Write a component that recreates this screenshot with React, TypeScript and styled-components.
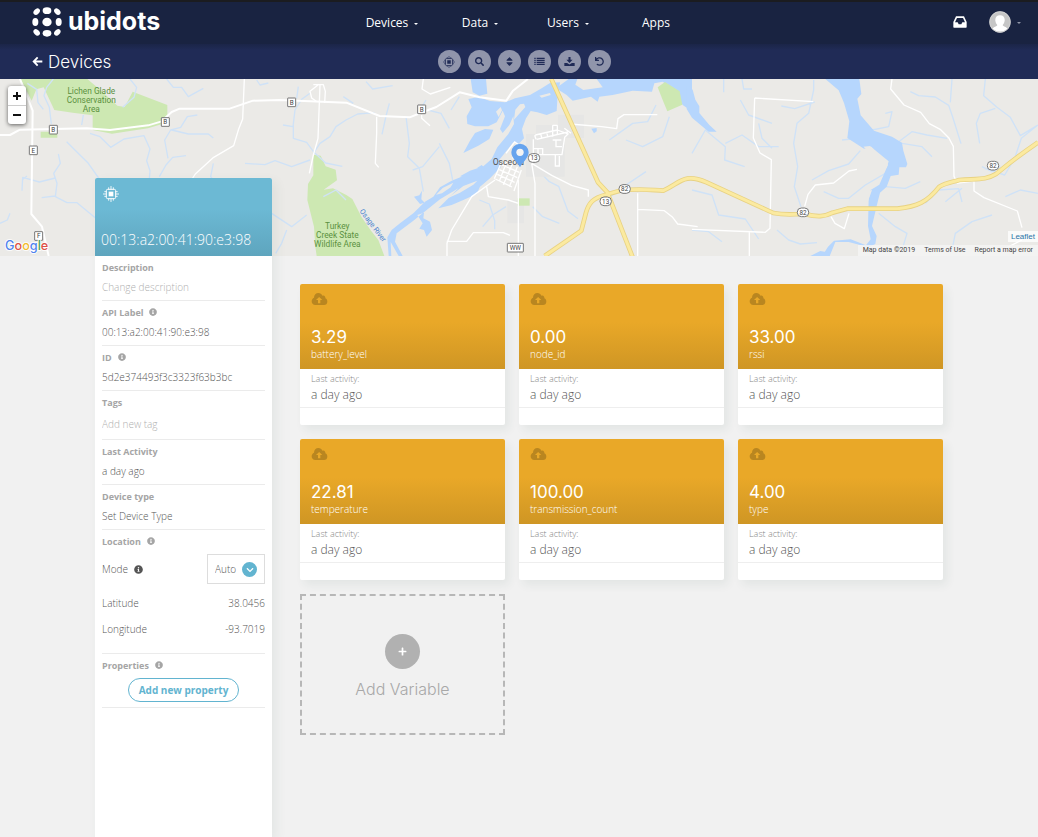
import React from "react";
import styled, { createGlobalStyle } from "styled-components";
import { FaChevronDown, FaInfoCircle, FaPlus, FaSearch, FaSort, FaUndo } from "react-icons/fa";

const GlobalStyle = createGlobalStyle`
  * { box-sizing: border-box; }
  body {
    margin: 0;
    background: #f1f1f1;
    color: #555;
    font-family: "Open Sans", "Liberation Sans", sans-serif;
    font-size: 10px;
    font-weight: 300;
  }
  button, input, select { font: inherit; color: inherit; }
  a { color: inherit; text-decoration: none; }
`;

const headingFont = `"Inter", "Open Sans", sans-serif`;

const Page = styled.div`
  min-height: 100vh;
  display: flex;
  flex-direction: column;
`;

const Bar = styled.div`
  display: grid;
  grid-template-columns: 1fr auto 1fr;
  align-items: center;
  padding: 0 17px 0 27px;
`;

const TopBar = styled(Bar).attrs({ as: "header" })`
  height: 44px;
  border-top: 2px solid #1b1c20;
  background: #192341;
  color: #fff;
`;

const SubBar = styled(Bar)`
  height: 35px;
  background: linear-gradient(#1b2548, #202b56 6px);
  color: #fff;
`;

const Brand = styled.a`
  display: flex;
  align-items: center;
  gap: 6px;
  padding: 0 0 4px 5px;
  font-family: ${headingFont};
  font-size: 25px;
  line-height: 28px;
  font-weight: 700;
  svg { margin-top: 2px; }
`;

const Nav = styled.nav`
  display: grid;
  grid-template-columns: repeat(4, 88px);
`;

const NavLink = styled.a`
  display: flex;
  align-items: center;
  justify-content: center;
  gap: 6px;
  font-size: 12px;
  line-height: 16px;
  font-weight: 400;
`;

const Caret = styled.span<{ $dim?: boolean }>`
  margin-top: 2px;
  border: solid transparent;
  border-width: 2px 2px 0;
  border-top-color: ${(p) => (p.$dim ? "#8f96a8" : "#fff")};
`;

const Account = styled.div`
  display: flex;
  justify-content: flex-end;
  align-items: center;
  gap: 22px;
  padding-bottom: 2px;
`;

const PlainButton = styled.button`
  display: flex;
  align-items: center;
  gap: 6px;
  padding: 0;
  border: 0;
  background: none;
`;

const BackLink = styled.a`
  display: flex;
  align-items: center;
  gap: 5px;
  padding-left: 5px;
  font-family: ${headingFont};
  font-size: 17px;
`;

const Toolbar = styled.div`
  display: flex;
  gap: 7px;
`;

const ToolButton = styled.button`
  display: grid;
  place-items: center;
  width: 23px;
  height: 23px;
  padding: 0;
  border: 0;
  border-radius: 50%;
  background: #9095ab;
  color: #202b56;
`;

const MapArea = styled.section`
  position: relative;
  height: 177px;
  background: #ebeae7;
  overflow: hidden;
  svg.map {
    display: block;
    width: 100%;
    height: 100%;
  }
`;

const ZoomControl = styled.div`
  position: absolute;
  top: 7px;
  left: 8px;
  display: flex;
  flex-direction: column;
  border-radius: 3px;
  background: #fff;
  box-shadow: 0 1px 4px rgba(0, 0, 0, 0.6);
`;

const ZoomButton = styled.button`
  display: grid;
  place-items: center;
  width: 18px;
  height: 19px;
  padding: 0;
  border: 0;
  background: none;
  color: #111;
  & + & {
    border-top: 1px solid #ccc;
  }
`;

const Credits = styled.div`
  position: absolute;
  right: 0;
  bottom: 0;
  display: flex;
  flex-direction: column;
  align-items: flex-end;
  gap: 3px;
  font-family: Roboto, "Liberation Sans", sans-serif;
  font-weight: 400;
  font-size: 7px;
  line-height: 11px;
  color: #444;
`;

const Credit = styled.div`
  display: flex;
  gap: 9px;
  padding: 0 5px;
  background: rgba(245, 245, 245, 0.8);
`;

const LeafletCredit = styled(Credit)`
  padding: 0 3px;
  background: rgba(255, 255, 255, 0.75);
  font-family: "Liberation Sans", sans-serif;
  font-size: 8px;
  color: #2a75a8;
`;

const Content = styled.main`
  flex: 1;
  display: grid;
  grid-template-columns: 177px 1fr;
  gap: 28px;
  width: 100%;
  max-width: 848px;
  margin: 0 auto;
`;

const Sidebar = styled.aside`
  position: relative;
  margin-top: -78px;
  background: #fff;
  border-radius: 2px 2px 0 0;
  box-shadow: 4px 4px 12px rgba(40, 80, 70, 0.07);
`;

const DeviceHeader = styled.div`
  display: flex;
  flex-direction: column;
  justify-content: space-between;
  height: 78px;
  padding: 8px 6px 6px;
  border-radius: 2px 2px 0 0;
  background: linear-gradient(#6cb9d4 40%, #5ea5be);
  color: #fff;
  svg { margin-left: 2px; }
`;

const DeviceName = styled.h1`
  margin: 0;
  font-size: 14px;
  line-height: 20px;
  font-weight: 300;
`;

const Section = styled.section`
  display: flex;
  flex-direction: column;
  gap: 7px;
  margin: 0 7px;
  padding: 5px 0 6px;
  border-bottom: 1px solid #ebebeb;
`;

const PropertySection = styled(Section)`
  padding-bottom: 5px;
`;

const LocationSection = styled(Section)`
  padding-bottom: 10px;
`;

const Label = styled.label`
  display: flex;
  align-items: center;
  gap: 6px;
  color: #a5a5a5;
  font-size: 9px;
  line-height: 13px;
  height: 12px;
  font-weight: 700;
`;

const Value = styled.div`
  line-height: 14px;
`;

const TextField = styled.input<{ $tall?: boolean }>`
  width: 100%;
  height: ${(p) => (p.$tall ? 18 : 14)}px;
  padding: 0;
  border: 0;
  background: none;
  outline: none;
  &::placeholder { color: #b0b0b0; opacity: 1; }
`;

const ModeRow = styled.div`
  display: flex;
  align-items: center;
  justify-content: space-between;
`;

const ModeLabel = styled.label`
  display: flex;
  align-items: center;
  gap: 6px;
`;

const SelectBox = styled.div`
  position: relative;
  width: 58px;
  height: 30px;
  select {
    width: 100%;
    height: 100%;
    padding: 0 7px;
    border: 1px solid #ddd;
    border-radius: 0;
    background: #fff;
    appearance: none;
  }
`;

const SelectArrow = styled.span`
  position: absolute;
  top: 8px;
  right: 8px;
  display: grid;
  place-items: center;
  width: 15px;
  height: 15px;
  border-radius: 50%;
  background: #62b4d0;
  color: #fff;
  pointer-events: none;
`;

const Coordinates = styled.dl`
  margin: 0;
`;

const Coordinate = styled.div`
  display: flex;
  justify-content: space-between;
  height: 26px;
  line-height: 24px;
  dd { margin: 0; }
`;

const PillButton = styled.button`
  align-self: center;
  height: 24px;
  padding: 0 10px;
  border: 1px solid #62b4d0;
  border-radius: 12px;
  background: #fff;
  color: #62b4d0;
  font-weight: 700;
`;

const CardGrid = styled.div`
  display: grid;
  grid-template-columns: repeat(3, 1fr);
  align-content: start;
  gap: 14px;
  padding: 28px 0;
`;

const Card = styled.article`
  height: 141px;
  border-radius: 2px;
  background: #fff;
  box-shadow: 4px 5px 10px rgba(40, 80, 70, 0.07);
`;

const CardTop = styled.div`
  display: flex;
  flex-direction: column;
  height: 85px;
  padding: 7px 10px 8px 11px;
  border-radius: 2px 2px 0 0;
  background: linear-gradient(#e9a828 45%, #cf9624);
  color: #fff;
  svg { margin-bottom: auto; }
`;

const Reading = styled.div`
  font-family: ${headingFont};
  font-size: 17px;
  line-height: 20px;
  font-weight: 400;
`;

const VariableName = styled.div`
  line-height: 14px;
`;

const CardBody = styled.div`
  padding: 4px 11px;
  border-bottom: 1px solid #eee;
`;

const ActivityLabel = styled.div`
  color: #888;
  font-size: 9px;
  line-height: 12px;
`;

const Activity = styled.div`
  padding-top: 2px;
  font-size: 12px;
  line-height: 16px;
`;

const AddCard = styled.button`
  display: flex;
  flex-direction: column;
  align-items: center;
  justify-content: center;
  gap: 10px;
  height: 141px;
  padding: 3px 0 0;
  border: 2px dashed #b7b7b7;
  background: none;
  color: #a8a8a8;
  font-family: ${headingFont};
  font-size: 16px;
`;

const PlusDisc = styled.span`
  display: grid;
  place-items: center;
  width: 35px;
  height: 35px;
  border-radius: 50%;
  background: #b1b1b1;
  color: #fff;
`;

const LogoMark = () => (
  <svg width="30" height="30" viewBox="-45 -45 90 90" fill="currentColor" aria-hidden="true">
    <ellipse rx="14" ry="13" />
    <ellipse cy="-34" rx="13" ry="10" />
    <ellipse cy="34" rx="13" ry="10" />
    <ellipse cx="-35" rx="9" ry="12" />
    <ellipse cx="35" rx="9" ry="12" />
    <ellipse cx="-31" cy="-31" rx="11" ry="8" transform="rotate(-45 -31 -31)" />
    <ellipse cx="31" cy="-31" rx="11" ry="8" transform="rotate(45 31 -31)" />
    <ellipse cx="-31" cy="31" rx="11" ry="8" transform="rotate(45 -31 31)" />
    <ellipse cx="31" cy="31" rx="11" ry="8" transform="rotate(-45 31 31)" />
  </svg>
);

const ChipIcon = ({ size }: { size: number }) => (
  <svg width={size} height={size} viewBox="0 0 48 48" fill="none" stroke="currentColor" aria-hidden="true">
    <rect x="10" y="10" width="28" height="28" rx="4" strokeWidth="3" />
    <rect x="17" y="17" width="14" height="14" fill="currentColor" stroke="none" />
    <path
      strokeWidth="2.6"
      d="M17 10V4M24 10V0M31 10V4M17 38v6M24 38v10M31 38v6M10 17H4M10 24H0M10 31H4M38 17h6M38 24h10M38 31h6"
    />
  </svg>
);

const BackArrow = () => (
  <svg width="11" height="11" viewBox="0 0 33 33" fill="none" stroke="currentColor" strokeWidth="5.5" aria-hidden="true">
    <path d="M17 4 5 16.500 17 29M6 16.500H31" />
  </svg>
);

const InboxIcon = () => (
  <svg width="14" height="12" viewBox="0 0 42 36" fill="currentColor" fillRule="evenodd" aria-hidden="true">
    <path d="M9 1h24l8 17v15q0 2-2 2H3q-2 0-2-2V18ZM12 6 6 19h8l3 6h8l3-6h8L30 6Z" />
  </svg>
);

const Avatar = () => (
  <svg width="22" height="22" viewBox="0 0 66 66" aria-hidden="true">
    <circle cx="33" cy="33" r="32" fill="#c6c6c6" />
    <path fill="#fff" d="M33 13c10 0 15 7 14 16-1 7-4 10-6 13 1 5 11 5 14 11a32 32 0 0 1-44 0c3-6 13-6 14-11-2-3-5-6-6-13-1-9 4-16 14-16Z" />
    <circle cx="33" cy="33" r="31" fill="none" stroke="#d9d9d9" strokeWidth="2" />
  </svg>
);

const ListIcon = () => (
  <svg width="11" height="9" viewBox="0 0 33 27" fill="currentColor" aria-hidden="true">
    <path d="M1 2h4v4H1zM8 2h24v4H8zM1 8h4v4H1zM8 8h24v4H8zM1 14h4v4H1zM8 14h24v4H8zM1 20h4v4H1zM8 20h24v4H8z" />
  </svg>
);

const DownloadIcon = () => (
  <svg width="11" height="11" viewBox="0 0 32 32" fill="currentColor" aria-hidden="true">
    <path d="M13 3h6v8h6l-9 9-9-9h6ZM1 20h8l7 5 7-5h8v9H1Z" />
  </svg>
);

const CloudIcon = () => (
  <svg width="17" height="15" viewBox="0 0 51 45" fill="#b98620" aria-hidden="true">
    <path
      fillRule="evenodd"
      d="M13 42C6 42 2 37 2 31c0-5 3-9 7-11C9 12 15 6 22 6c6 0 10 3 12 8 6-2 10 3 9 8 4 2 6 5 6 10 0 6-4 10-10 10ZM21 37h7V27h6L24.500 18 15 27h6Z"
    />
  </svg>
);

const Shield = ({ x, y, text, round, w = 24 }: { x: number; y: number; text: string; round?: boolean; w?: number }) => (
  <g>
    <rect x={x - w / 2} y={y - 13} width={w} height="26" rx={round ? 12 : 1} fill="#fff" stroke="#777" strokeWidth="3" />
    <text x={x} y={y + 7} textAnchor="middle" fontSize="19" fill="#444">
      {text}
    </text>
  </g>
);

const grass = "#cde8b2";
const water = "#b6d6fd";

/* Drawn on a 3114-unit wide sheet, three units to a pixel at the design width. */
const MapDrawing = () => (
  <svg className="map" viewBox="0 237 3114 531" preserveAspectRatio="xMidYMid slice" fontFamily="Roboto, sans-serif" fontWeight="400" role="img" aria-label="Map around Osceola">
    <rect y="237" width="3114" height="531" fill="#ebeae7" />
    <g fill={grass}>
      <path d="M62 237H262l45 38 45 42 22 4 24-46 104 40v30l-18 28-40 12-108 16-58-11V346l-60-8-55-8-18-38-14-30-22 6-14 34Z" />
      <path d="M122 395h24l16 8 10-6v16h-50Z" />
      <path d="M940 464l22 3 15 32 30 10 4 32-40 28 28-4 40 20 18 12 28 55 28 40 22 28 18 48H950l-4-28-4-60-20-80 2-48 16-26Z" />
    </g>
    <g fill="none" stroke="#cfe2f7" strokeWidth="4" strokeLinejoin="round">
      <path d="M82 250l28 18 4 40 16 20M160 237l-20 25-8 25 16 35 6 50M390 237l20 25-8 30-34 30M250 345l-5 30M500 237l20 25h25l20 28 45-25M200 425l30 30 35 35 35 50 40 30 20 18M270 400l30 10 32 32 40-25 60-10 18 40-10 35 10 30-2 25M592 345l-30 5-20 32-30 8-18 30 10 55M515 390l50 12 60 0 15 12M478 530l20-35 20-23 40-5M175 462l6 28-20 30 10 30-5 40 35 18h30l60 50M66 572l2-40 50 14 48-12M66 540l15-12M165 588l-40 5M0 670l22-10 8-20M895 260l-5 35M735 490l60 4 30-12 50 18 55-20M930 280l-25 18-20 32-6 50-30-5M880 375v40l40 12 22 30 35 32 50 10M940 460l20-30 30-20 18-30 30-20 35-18 50-4M640 490l-8 40 20 25M815 640l60 40 45-35M860 690l-15 40-18 30M1030 290l30 20M770 240l10 15 25-6M1038 600l-30 -30-38 20" />
      <g transform="translate(1038 0)">
        <path d="M60 245l20 22 60-10M130 310l-10 38-12 55M180 350l10 80-5 40 35 35 12 70M240 300l-28 45M245 330l40 10 25 45M280 440l-50 60-30 10M280 430l30 60 10 50M340 290l-25 40M570 505l40 40 28 14 28 75 30 22M560 620l30 30 50 20M400 600l30 12 16 50 0 26M480 620l-40 25-30 35M790 420l70-50 45-5 25-50M840 420l50 20 60-30 20-60M780 600l60-45 60-40" />
      </g>
      <g transform="translate(2076 0)">
        <path d="M150 237l5 30 25 0M145 300l25 45 70 25M95 237v40M268 318l40 8 60-20M365 240v30l-15 70-35 30-10 60 12 70-10 60 20 60M0 460l40-70 60 50-2 40 60 20M100 430l50-25 50 35 60 0M200 370l10 45 30 30M360 540l50-28 60-20 35-40M450 420l50-5M580 340l20-5-10 45-50 10M600 440l60-45 45 10 60 10M630 430l60 10 30 30M580 520l-60 35-50 40-30 0-45-20M580 560l60 5 45-20M655 275l25 12 50 4 40 25 12 35 25 80M780 237l-5 70M880 237l-5 50 40 35 40 30 30 55 50-30M910 325l-45 15-12 30 10 60M1038 375l-50 40-20 60-30 50-60-20M0 570l60 15 20 60 80 12 40 60M255 690l35 30 35 12 50-4M560 640l50 40 35 20-15 50M700 610l40-40 60-4 10 40M810 565l-50 40M780 750l10-50 50-35 60-20M870 500l30 15 25-15M940 590l45-20 53 10M0 690l50 5 40 30" />
      </g>
    </g>
    <g transform="translate(1350 237)">
      <path
        fill={water}
        d="M62 0H108L112 44 88 50 68 40ZM55 60 85 54 120 66 165 70 195 58 240 48 275 28 300 12 330 10 322 62 320 96 290 108 262 100 242 96 228 118 216 150 222 178 205 196 190 190 162 225 135 258 118 298 80 330 60 300 30 292 60 275 100 262 125 240 142 205 175 165 192 135 190 112 178 138 158 162 150 150 165 112 158 95 140 130 115 142 75 142 52 135 50 112 65 85ZM40 222 60 185 75 162 105 150 130 152 118 180 85 200Z"
      />
      <path fill="#ebeae7" d="M192 122 196 92 210 76 222 74 226 84 212 100ZM268 50 300 42 302 48 275 56ZM138 98 152 84 156 94 146 114Z" />
    </g>
    <g transform="translate(1140 450)">
      <path
        fill={water}
        d="M360 30 330 50 300 62 250 78 215 92 180 112 160 140 135 155 100 190 60 220 35 240 22 262 26 318H34L32 276 56 318H68L45 275 50 250 100 212 140 180 180 148 235 115 175 175 215 165 250 150 290 132 300 110 330 85 362 52ZM102 140 118 136 126 122 124 148 134 158 120 162ZM112 195 132 188 130 205 150 215 156 240 140 260 132 240 118 236 128 220ZM290 55 305 45 312 52Z"
      />
      <path fill="#ebeae7" d="M168 134 188 114 220 98 212 112 186 130ZM200 146 250 108 292 92 280 104 240 128Z" />
    </g>
    <g transform="translate(1038 0)">
      <path fill={water} d="M630 265 668 237H1038V334L1010 315 985 270 950 245 925 250 918 275 860 272 800 285 760 290 755 305 735 290 680 302 662 285Z" />
      <path fill="#ebeae7" d="M694 237 688 254 712 270 770 262 752 237Z" />
      <path fill={water} d="M736 386l16-2 0 10-8 6Z" />
    </g>
    <path fill={water} d="M2060 255l18 14 8 30 12 20 0 20 30 36 22 20-24 0-50-42-16-26Z" />
    <g transform="translate(2076 0)" fill={water}>
      <path d="M400 237h102l6 45-12 14 10 50 40 46 54 18 30 18 4 24 12 40-4 10-20 0-2 22-24 4-12 32-20 18-10 40-14 60 14 30-4 24-20 10-60-16-40 0-20 50-28 6 26-42 18-18 50-4 46 18 14-18-8-40 2-80 6-28 26-16 26-60-50-54-22 6-50-32 6-50-16-55-16-38Z" />
      <path d="M355 768l30-15 30 5-8 10Z" />
      <path fill="#ebeae7" d="M514 440l20-2 56 46-6 20-30-30ZM510 606l10-30 20-6-12 34Z" />
    </g>
    <path fill={grass} d="M1973 262l22-16 44 28 8 40-45 20-14-34Z" />
    <g fill="#e6e6e5" transform="translate(1038 0)">
      <path d="M636 344h78v70h-58v116H540V402h30V375h66ZM484 600h50v70h-50Z" />
    </g>
    <path fill={grass} d="M1553 595h36v22h-36Z" />
    <g fill="none" stroke="#fff" strokeLinejoin="round">
      <path strokeWidth="6" d="M0 405h30l30-16 200-4 70 5 115-14 40-12 30-28 24-10h150l70-24 80-2 200 8 100 40 90 4 40-16 40-15 70-44 60 15 80 10 20-30 45-35M60 237l38 95-4 310 32 38 20 88" />
      <path strokeWidth="4" d="M733 237l-5 120-12 30-15 50-60 35-55 50-8 12M960 255l-6 160-14 50-12 55M940 254l30 0 6 20-2 35M955 254l-25 20 5 20 14 10M1130 350v50l-4 90 10 12M1265 345l0 10 25 22M1270 237l-4 30 25 15 60-20M1595 490l60 36 60 30 50 14 0 20M1595 490l10 60v218M1485 540l-70 50-60 100-14 40v38M1460 560l5 30 60 10 30 10M1340 724h60l20-26h90l20 8M1710 372l95 8 45 6 4-30 18-12 100 0M1913 580v188M1913 628l80 4 25 20 15 20 60 8M1555 540v228" />
      <g transform="translate(2076 0)" strokeWidth="4">
        <path d="M188 294l176 11M188 294l-4 120 20 45 34 20-4 206-14 12L0 688M172 697v71M495 508l-24 5-46 36-55 6-22 28-10 36M417 650l12 20 28 16 14-46M600 237l-4 30 40 48 50 22 26 34 34 18 24 24 14 26 2 90 10 20 50-6 0 30 30 20 100 40 14 50M990 720l-60 30" />
      </g>
    </g>
    <g transform="translate(1038 0)" fill="none" stroke="#fff" strokeWidth="4">
      <path d="M468 495l52 22M460 509l54 24M454 523l52 24M448 537l50 24M465 490l-20 46M484 480l-24 64M500 490l-28 64M514 500l-24 60M526 510l-22 63M480 460l26-34 14 10-20 40M568 405l66-15M572 418l94-22M566 406l4 12M584 402l4 14M602 398l4 14M620 376v34M634 376v30M620 376h14M634 390l32 12-10 10-8 52h-84M562 418v46h28v-18h-26M576 446v18M620 420h26M630 420v20h18M628 464v34h12v-30M655 385l20 15" />
    </g>
    <g fill="none" strokeLinejoin="round">
      {[
        { color: "#e8d283", width: 14 },
        { color: "#fbeaa0", width: 9 },
      ].map(({ color, width }) => (
        <path
          key={color}
          stroke={color}
          strokeWidth={width}
          d="M1654 237l140 310 28 30 76 195M1634 768l110-76 14-54c8-28 20-44 60-54l42-12c60-8 90-2 130 0 50-22 60-55 130-25l200 92c40 8 60 3 94 3 40 10 60 8 84-4l44-12h150c60-6 90-20 126-66 20-12 40-14 60-20 60-4 80 0 110-18 30-24 60-50 126-95"
        />
      ))}
    </g>
    <g fontSize="25" fill="#5a9040" textAnchor="middle">
      <text x="274" y="281">Lichen Glade</text>
      <text x="274" y="309">Conservation</text>
      <text x="274" y="336">Area</text>
      <text x="1012" y="686">Turkey</text>
      <text x="1012" y="714">Creek State</text>
      <text x="1012" y="742">Wildlife Area</text>
    </g>
    <text fontSize="22" fill="#4d86d0" transform="translate(1078 634) rotate(53)">Osage River</text>
    <text x="1478" y="494" fontSize="26" fill="#555">Osceola</text>
    <Shield x={875} y={307} text="B" />
    <Shield x={496} y={366} text="B" />
    <Shield x={160} y={389} text="B" />
    <Shield x={100} y={451} text="E" />
    <Shield x={116} y={708} text="F" />
    <Shield x={1265} y={328} text="B" />
    <Shield x={1546} y={743} text="WW" w={48} />
    <Shield x={1602} y={474} text="13" w={34} round />
    <Shield x={1817} y={604} text="13" w={34} round />
    <Shield x={1874} y={567} text="82" w={34} round />
    <Shield x={2409} y={637} text="82" w={34} round />
    <Shield x={2979} y={497} text="82" w={34} round />
    <path fill="#67a4ee" d="M1560 502c-8-16-26-28-26-45a26 26 0 0 1 52 0c0 17-18 29-26 45Z" />
    <circle cx="1560" cy="457" r="11" fill="#f4f4f4" />
    <text x="15" y="751" fontFamily="Inter, sans-serif" fontSize="38" fontWeight="500" stroke="#fff" strokeWidth="5" paintOrder="stroke">
      <tspan fill="#4f83ee">G</tspan>
      <tspan fill="#dc5147">o</tspan>
      <tspan fill="#f2bb2e">o</tspan>
      <tspan fill="#4f83ee">g</tspan>
      <tspan fill="#46a45c">l</tspan>
      <tspan fill="#dc5147">e</tspan>
    </text>
  </svg>
);

const variables = [
  { value: "3.29", name: "battery_level" },
  { value: "0.00", name: "node_id" },
  { value: "33.00", name: "rssi" },
  { value: "22.81", name: "temperature" },
  { value: "100.00", name: "transmission_count" },
  { value: "4.00", name: "type" },
];

export default function App() {
  return (
    <Page>
      <GlobalStyle />
      <TopBar>
        <Brand href="#">
          <LogoMark />
          ubidots
        </Brand>
        <Nav>
          <NavLink href="#">Devices <Caret /></NavLink>
          <NavLink href="#">Data <Caret /></NavLink>
          <NavLink href="#">Users <Caret /></NavLink>
          <NavLink href="#">Apps</NavLink>
        </Nav>
        <Account>
          <PlainButton aria-label="Inbox"><InboxIcon /></PlainButton>
          <PlainButton aria-label="Account">
            <Avatar />
            <Caret $dim />
          </PlainButton>
        </Account>
      </TopBar>
      <SubBar>
        <BackLink href="#">
          <BackArrow />
          Devices
        </BackLink>
        <Toolbar>
          <ToolButton aria-label="Device icon"><ChipIcon size={12} /></ToolButton>
          <ToolButton aria-label="Search"><FaSearch size={9} /></ToolButton>
          <ToolButton aria-label="Sort"><FaSort size={11} /></ToolButton>
          <ToolButton aria-label="List view"><ListIcon /></ToolButton>
          <ToolButton aria-label="Download"><DownloadIcon /></ToolButton>
          <ToolButton aria-label="Refresh"><FaUndo size={9} /></ToolButton>
        </Toolbar>
      </SubBar>
      <MapArea>
        <MapDrawing />
        <ZoomControl>
          <ZoomButton aria-label="Zoom in">
            <svg width="8" height="8" viewBox="0 0 8 8" stroke="currentColor" strokeWidth="2"><path d="M0 4h8M4 0v8" /></svg>
          </ZoomButton>
          <ZoomButton aria-label="Zoom out">
            <svg width="8" height="8" viewBox="0 0 8 8" stroke="currentColor" strokeWidth="2"><path d="M0 4h8" /></svg>
          </ZoomButton>
        </ZoomControl>
        <Credits>
          <LeafletCredit><a href="#">Leaflet</a></LeafletCredit>
          <Credit>
            <span>Map data ©2019</span>
            <a href="#">Terms of Use</a>
            <a href="#">Report a map error</a>
          </Credit>
        </Credits>
      </MapArea>
      <Content>
        <Sidebar>
          <DeviceHeader>
            <ChipIcon size={16} />
            <DeviceName>00:13:a2:00:41:90:e3:98</DeviceName>
          </DeviceHeader>
          <Section>
            <Label htmlFor="description">Description</Label>
            <TextField id="description" placeholder="Change description" />
          </Section>
          <Section>
            <Label as="div">API Label <FaInfoCircle size={8} /></Label>
            <Value>00:13:a2:00:41:90:e3:98</Value>
          </Section>
          <Section>
            <Label as="div">ID <FaInfoCircle size={8} /></Label>
            <Value>5d2e374493f3c3323f63b3bc</Value>
          </Section>
          <Section>
            <Label htmlFor="tags">Tags</Label>
            <TextField id="tags" placeholder="Add new tag" $tall />
          </Section>
          <Section>
            <Label as="div">Last Activity</Label>
            <Value>a day ago</Value>
          </Section>
          <Section>
            <Label as="div">Device type</Label>
            <Value>Set Device Type</Value>
          </Section>
          <LocationSection>
            <Label as="div">Location <FaInfoCircle size={8} /></Label>
            <ModeRow>
              <ModeLabel htmlFor="mode">Mode <FaInfoCircle size={9} /></ModeLabel>
              <SelectBox>
                <select id="mode" defaultValue="Auto">
                  <option>Auto</option>
                  <option>Manual</option>
                </select>
                <SelectArrow><FaChevronDown size={8} /></SelectArrow>
              </SelectBox>
            </ModeRow>
            <Coordinates>
              <Coordinate><dt>Latitude</dt><dd>38.0456</dd></Coordinate>
              <Coordinate><dt>Longitude</dt><dd>-93.7019</dd></Coordinate>
            </Coordinates>
          </LocationSection>
          <PropertySection>
            <Label as="div">Properties <FaInfoCircle size={8} /></Label>
            <PillButton>Add new property</PillButton>
          </PropertySection>
        </Sidebar>
        <CardGrid>
          {variables.map((v) => (
            <Card key={v.name}>
              <CardTop>
                <CloudIcon />
                <Reading>{v.value}</Reading>
                <VariableName>{v.name}</VariableName>
              </CardTop>
              <CardBody>
                <ActivityLabel>Last activity:</ActivityLabel>
                <Activity>a day ago</Activity>
              </CardBody>
            </Card>
          ))}
          <AddCard>
            <PlusDisc><FaPlus size={9} /></PlusDisc>
            Add Variable
          </AddCard>
        </CardGrid>
      </Content>
    </Page>
  );
}
